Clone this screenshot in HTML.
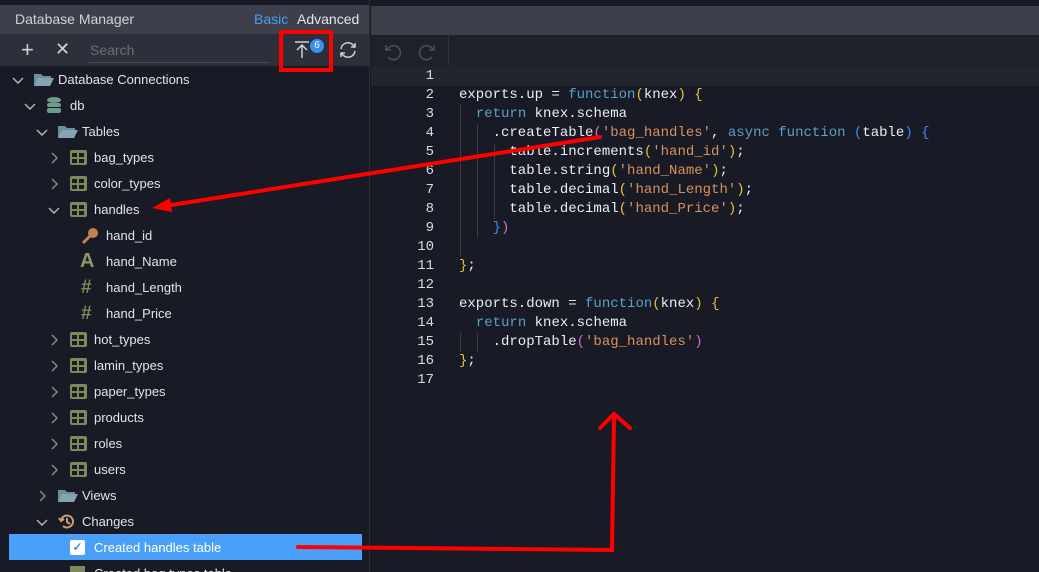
<!DOCTYPE html>
<html><head><meta charset="utf-8"><style>
*{margin:0;padding:0;box-sizing:border-box}
html,body{width:1039px;height:572px;overflow:hidden}
body{background:#181a25;font-family:"Liberation Sans",sans-serif;color:#d6d8e0;position:relative}
.side{position:absolute;left:0;top:0;width:370px;height:572px;background:#181a25;border-right:1px solid #2c2e38;overflow:hidden}
.hdr{position:absolute;left:0;top:5px;width:369px;height:29px;background:#3d3f4b;font-size:14px}
.hdr .t{position:absolute;left:15px;top:6px;color:#d0d2da}
.hdr .b{position:absolute;left:254px;top:6px;color:#4a9cf0}
.hdr .a{position:absolute;left:297px;top:6px;color:#e4e6ec}
.tb{position:absolute;left:0;top:34px;width:369px;height:32px;background:#2d2f3a}
.row{position:absolute;height:26px;font-size:13px;line-height:27px;white-space:nowrap;color:#e2e4ea}
.cd,.cr{position:absolute;top:8px;width:12px;height:12px}
.tic2{position:absolute;left:70px;width:17px;height:15px;background:#7a8a5a;border-radius:2px}
.tic2:before{content:"";position:absolute;left:2px;top:3px;width:5px;height:4px;background:#181a25;box-shadow:7px 0 #181a25,0 6px #181a25,7px 6px #181a25}
.ed{position:absolute;left:371px;top:0;right:0;height:572px;background:#181a25}
.code{position:absolute;font-family:"Liberation Mono",monospace;font-size:14px;line-height:19px;white-space:pre;color:#eceef4}
.ln{position:absolute;left:0;width:434px;text-align:right;font-family:"Liberation Mono",monospace;font-size:14px;line-height:19px;color:#d8dae2}
.k{color:#5aa0c8}.s{color:#d8925a}.y{color:#e8c030}.p{color:#d070d0}.bl{color:#3a8ef0}
</style></head><body>
<svg width="0" height="0" style="position:absolute"><defs>
<symbol id="dn" viewBox="0 0 12 12"><path d="M1 4l5 5 5-5" fill="none" stroke="#b8bac2" stroke-width="1.4"/></symbol>
<symbol id="rt" viewBox="0 0 12 12"><path d="M4 1l5 5-5 5" fill="none" stroke="#8a8c94" stroke-width="1.4"/></symbol>
<symbol id="fd" viewBox="0 0 20 15"><path d="M0 2h7l2 2h8v2H5L0 14z" fill="#6e8ea0"/><path d="M4 6h16l-4 8H0z" fill="#86a4b4"/></symbol>
</defs></svg>
<div class="side">
 <div class="hdr"><span class="t">Database Manager</span><span class="b">Basic</span><span class="a">Advanced</span></div>
 <div class="tb">
  <div style="position:absolute;left:21px;top:3px;font-size:22px;color:#cfd1d8">+</div>
  <div style="position:absolute;left:55px;top:5px;font-size:18px;color:#cfd1d8">✕</div>
  <div style="position:absolute;left:90px;top:8px;font-size:14px;color:#6c6e78">Search</div>
  <div style="position:absolute;left:89px;top:28px;width:180px;height:1px;background:#4a4c56"></div>
  <svg style="position:absolute;left:292px;top:6px" width="20" height="20" viewBox="0 0 20 20" fill="none" stroke="#cfd1d8" stroke-width="1.5"><path d="M3 2h14M10 18V5M5 10l5-5 5 5"/></svg>
  <div style="position:absolute;left:310px;top:5px;width:14px;height:14px;border-radius:7px;background:#3a8ef0;color:#fff;font-size:10px;text-align:center;line-height:14px">6</div>
  <svg style="position:absolute;left:338px;top:6px" width="20" height="20" viewBox="0 0 20 20" fill="none" stroke="#cfd1d8" stroke-width="1.5"><path d="M3 9a7 7 0 0 1 12-4l2 2M17 11a7 7 0 0 1-12 4l-2-2M17 3v4h-4M3 17v-4h4"/></svg>
 </div>
 <div style="position:absolute;left:279px;top:30px;width:54px;height:42px;border:4px solid #ff0000"></div>

 <div class="row" style="top:66px;left:12px"><svg class="cd"><use href="#dn"/></svg><svg style="position:absolute;left:22px;top:6px" width="20" height="15"><use href="#fd"/></svg><span style="position:absolute;left:46px">Database Connections</span></div>
 <div class="row" style="top:92px;left:24px"><svg class="cd"><use href="#dn"/></svg><svg style="position:absolute;left:22px;top:5px" width="16" height="17"><ellipse cx="8" cy="3" rx="7" ry="3" fill="#6e9a8a"/><rect x="1" y="6" width="14" height="4" rx="2" fill="#6e9a8a"/><rect x="1" y="11" width="14" height="5" rx="2" fill="#6e9a8a"/></svg><span style="position:absolute;left:46px">db</span></div>
 <div class="row" style="top:118px;left:36px"><svg class="cd"><use href="#dn"/></svg><svg style="position:absolute;left:22px;top:6px" width="20" height="15"><use href="#fd"/></svg><span style="position:absolute;left:46px">Tables</span></div>

 <div class="row" style="top:144px;left:48px"><svg class="cr"><use href="#rt"/></svg><span style="position:absolute;left:46px">bag_types</span></div>
 <div class="row" style="top:170px;left:48px"><svg class="cr"><use href="#rt"/></svg><span style="position:absolute;left:46px">color_types</span></div>
 <div class="row" style="top:196px;left:48px"><svg class="cd"><use href="#dn"/></svg><span style="position:absolute;left:46px">handles</span></div>
 <div class="row" style="top:222px;left:106px">hand_id</div>
 <div class="row" style="top:248px;left:106px">hand_Name</div>
 <div class="row" style="top:274px;left:106px">hand_Length</div>
 <div class="row" style="top:300px;left:106px">hand_Price</div>
 <div class="row" style="top:326px;left:48px"><svg class="cr"><use href="#rt"/></svg><span style="position:absolute;left:46px">hot_types</span></div>
 <div class="row" style="top:352px;left:48px"><svg class="cr"><use href="#rt"/></svg><span style="position:absolute;left:46px">lamin_types</span></div>
 <div class="row" style="top:378px;left:48px"><svg class="cr"><use href="#rt"/></svg><span style="position:absolute;left:46px">paper_types</span></div>
 <div class="row" style="top:404px;left:48px"><svg class="cr"><use href="#rt"/></svg><span style="position:absolute;left:46px">products</span></div>
 <div class="row" style="top:430px;left:48px"><svg class="cr"><use href="#rt"/></svg><span style="position:absolute;left:46px">roles</span></div>
 <div class="row" style="top:456px;left:48px"><svg class="cr"><use href="#rt"/></svg><span style="position:absolute;left:46px">users</span></div>
 <div class="row" style="top:482px;left:36px"><svg class="cr"><use href="#rt"/></svg><svg style="position:absolute;left:22px;top:6px" width="20" height="15"><use href="#fd"/></svg><span style="position:absolute;left:46px">Views</span></div>
 <div class="row" style="top:508px;left:36px"><svg class="cd"><use href="#dn"/></svg><svg style="position:absolute;left:22px;top:5px" width="17" height="17" fill="none" stroke="#c8a070" stroke-width="2"><path d="M3 8a6 6 0 1 1 2 5M1 5l2 3 3-2M9 5v4l3 2"/></svg><span style="position:absolute;left:46px">Changes</span></div>
 <div style="position:absolute;left:9px;top:534px;width:353px;height:26px;background:#4aa0f8"></div>
 <div class="row" style="top:534px;left:70px"><span style="position:absolute;left:0;top:6px;width:15px;height:15px;background:#fff;border-radius:2px;color:#3a8ef0;font-size:12px;line-height:15px;text-align:center;font-weight:bold">✓</span><span style="position:absolute;left:24px;color:#fff">Created handles table</span></div>
 <div class="row" style="top:560px;left:70px"><span style="position:absolute;left:0;top:6px;width:15px;height:15px;background:#7a8a5a"></span><span style="position:absolute;left:24px">Created bag types table</span></div>
 <div class="tic2" style="top:150px"></div><div class="tic2" style="top:176px"></div><div class="tic2" style="top:202px"></div>
 <div class="tic2" style="top:332px"></div><div class="tic2" style="top:358px"></div><div class="tic2" style="top:384px"></div>
 <div class="tic2" style="top:410px"></div><div class="tic2" style="top:436px"></div><div class="tic2" style="top:462px"></div>
 <svg style="position:absolute;left:81px;top:227px" width="18" height="18"><circle cx="12" cy="6" r="5" fill="#c0844c"/><path d="M9 9L2 16" stroke="#c0844c" stroke-width="3"/></svg>
 <div style="position:absolute;left:80px;top:250px;font-size:20px;font-weight:bold;color:#8a9a6a;font-family:'Liberation Sans',sans-serif">A</div>
 <div style="position:absolute;left:81px;top:277px;font-size:19px;font-weight:bold;color:#7a8a5a">#</div>
 <div style="position:absolute;left:81px;top:303px;font-size:19px;font-weight:bold;color:#7a8a5a">#</div>
</div>

<div class="ed">
 <div style="position:absolute;left:0;top:6px;right:0;height:29px;background:#3d3f4b"></div>
 <div style="position:absolute;left:0;top:35px;right:0;height:31px;background:#1e202a"></div>
 <svg style="position:absolute;left:10px;top:40px" width="60" height="22" fill="none" stroke="#4a4c56" stroke-width="1.6"><path d="M5 5v5h5M6 10a7 7 0 1 1 1 7"/><path d="M53 5v5h-5M52 10a7 7 0 1 0-1 7"/></svg>
 <div style="position:absolute;left:77px;top:35px;width:1px;height:31px;background:#2e3039"></div>
 <div style="position:absolute;left:0;top:66px;right:0;height:20px;background:#22242e"></div>
</div>
<div class="ln" style="top:67px">1<br>2<br>3<br>4<br>5<br>6<br>7<br>8<br>9<br>10<br>11<br>12<br>13<br>14<br>15<br>16<br>17</div>
<div style="position:absolute;left:460px;top:105px;width:1px;height:152px;background:#3a3c46"></div>
<div style="position:absolute;left:477px;top:124px;width:1px;height:114px;background:#3a3c46"></div>
<div style="position:absolute;left:494px;top:143px;width:1px;height:76px;background:#3a3c46"></div>
<div style="position:absolute;left:460px;top:333px;width:1px;height:19px;background:#3a3c46"></div>
<div style="position:absolute;left:477px;top:333px;width:1px;height:19px;background:#3a3c46"></div>
<div class="code" style="left:459px;top:86px">exports.up = <span class="k">function</span><span class="y">(</span>knex<span class="y">)</span> <span class="y">{</span>
  <span class="k">return</span> knex.schema
    .createTable<span class="p">(</span><span class="s">'bag_handles'</span>, <span class="k">async</span> <span class="k">function</span> <span class="bl">(</span>table<span class="bl">)</span> <span class="bl">{</span>
      table.increments<span class="y">(</span><span class="s">'hand_id'</span><span class="y">)</span>;
      table.string<span class="y">(</span><span class="s">'hand_Name'</span><span class="y">)</span>;
      table.decimal<span class="y">(</span><span class="s">'hand_Length'</span><span class="y">)</span>;
      table.decimal<span class="y">(</span><span class="s">'hand_Price'</span><span class="y">)</span>;
    <span class="bl">}</span><span class="p">)</span>

<span class="y">}</span>;

exports.down = <span class="k">function</span><span class="y">(</span>knex<span class="y">)</span> <span class="y">{</span>
  <span class="k">return</span> knex.schema
    .dropTable<span class="p">(</span><span class="s">'bag_handles'</span><span class="p">)</span>
<span class="y">}</span>;
</div>
<svg style="position:absolute;left:0;top:0" width="1039" height="572">
 <g stroke="#ff0000" stroke-width="4" fill="none" stroke-linecap="round">
  <path d="M600 137L165 206"/>
  <path d="M298 547L612 550L614 418"/>
  <path d="M600 428L614 414L630 428"/>
 </g>
 <path d="M152 208L170 198L172 212Z" fill="#ff0000"/>
</svg>
</body></html>
